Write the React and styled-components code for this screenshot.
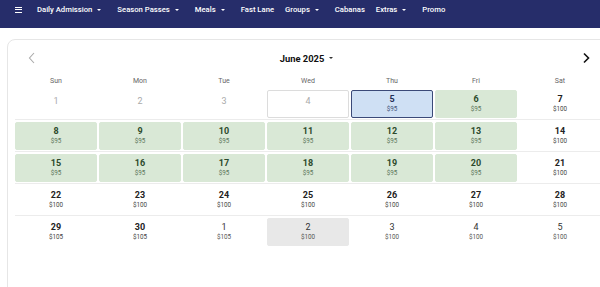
import styled, { createGlobalStyle } from "styled-components";

const Global = createGlobalStyle`
  html, body {
    margin: 0;
    padding: 0;
    background: #fff;
    overflow: hidden;
    font-family: Roboto, "Liberation Sans", sans-serif;
  }
`;

const Nav = styled.nav`
  height: 28px;
  background: #262d6a;
  display: flex;
  align-items: flex-start;
  padding: 5px 0 0 15px;
  box-sizing: border-box;
  color: #fff;
`;

const Burger = styled.div`
  width: 7px;
  height: 6px;
  margin: 2px 15px 0 0;
  border-top: 1.3px solid #fff;
  border-bottom: 1.3px solid #fff;
  position: relative;
  box-sizing: border-box;

  &::after {
    content: "";
    position: absolute;
    left: 0;
    right: 0;
    top: 1.2px;
    border-top: 1.3px solid #fff;
  }
`;

const NavItem = styled.div`
  display: flex;
  align-items: center;
  font-size: 7.7px;
  font-weight: 500;
  line-height: 10px;
  margin-right: 11px;
  white-space: nowrap;
`;

const Caret = styled.span`
  width: 0;
  height: 0;
  margin: 0 5px;
  border-left: 2px solid transparent;
  border-right: 2px solid transparent;
  border-top: 2.5px solid ${(p) => p.$color || "#fff"};
`;

const Card = styled.section`
  margin: 11px 0 0 7px;
  width: 602px;
  height: 262px;
  border: 1px solid #e6e6e6;
  border-radius: 8px;
  box-sizing: border-box;
  padding: 9px 7px 0;
`;

const Header = styled.div`
  height: 18px;
  display: flex;
  align-items: center;
  justify-content: space-between;
  padding: 0 10px 0 12px;
`;

const Month = styled.div`
  display: flex;
  align-items: center;
  font-size: 9.4px;
  font-weight: 700;
  color: #111;
`;

const Arrow = styled.svg`
  width: 10px;
  height: 12px;
`;

const Weekdays = styled.div`
  display: grid;
  grid-template-columns: repeat(7, 1fr);
  column-gap: 2px;
  margin-top: 7px;
  height: 14px;
`;

const Weekday = styled.div`
  text-align: center;
  font-size: 7px;
  line-height: 14px;
  color: #666;
`;

const Week = styled.div`
  display: grid;
  grid-template-columns: repeat(7, 1fr);
  column-gap: 2px;
  padding: 2px 0 1px;
  border-bottom: 1px solid ${(p) => (p.$last ? "transparent" : "#ececec")};
`;

const tones = {
  past: { bg: "#fff", border: "transparent", num: "#aaa", price: "#888" },
  today: { bg: "#fff", border: "#dcdcdc", num: "#aaa", price: "#888" },
  selected: { bg: "#cfe0f4", border: "#3b4a78", num: "#1f2f55", price: "#44557a" },
  deal: { bg: "#d9e8d6", border: "#d9e8d6", num: "#2c4a2c", price: "#5b775b" },
  normal: { bg: "#fff", border: "transparent", num: "#222", price: "#444" },
  next: { bg: "#fff", border: "transparent", num: "#333", price: "#555" },
  nextSel: { bg: "#e8e8e8", border: "#e8e8e8", num: "#333", price: "#555" },
};

const Cell = styled.div`
  height: 28px;
  box-sizing: border-box;
  border-radius: 2px;
  border: 1px solid ${(p) => tones[p.$tone].border};
  background: ${(p) => tones[p.$tone].bg};
  display: flex;
  flex-direction: column;
  align-items: center;
  justify-content: ${(p) => (p.$price ? "center" : "flex-start")};
  padding-top: ${(p) => (p.$price ? "0" : "5px")};
`;

const Num = styled.div`
  font-size: 9px;
  line-height: 11px;
  font-weight: ${(p) => (p.$bold ? 700 : 400)};
  color: ${(p) => tones[p.$tone].num};
`;

const Price = styled.div`
  font-size: 6.3px;
  line-height: 9px;
  color: ${(p) => tones[p.$tone].price};
`;

const navItems = [
  ["Daily Admission", true],
  ["Season Passes", true],
  ["Meals", true],
  ["Fast Lane", false],
  ["Groups", true],
  ["Cabanas", false],
  ["Extras", true],
  ["Promo", false],
];

const days = ["Sun", "Mon", "Tue", "Wed", "Thu", "Fri", "Sat"];

const weeks = [
  [
    [1, "past"],
    [2, "past"],
    [3, "past"],
    [4, "today"],
    [5, "selected", "$95"],
    [6, "deal", "$95"],
    [7, "normal", "$100"],
  ],
  [8, 9, 10, 11, 12, 13].map((d) => [d, "deal", "$95"]).concat([[14, "normal", "$100"]]),
  [15, 16, 17, 18, 19, 20].map((d) => [d, "deal", "$95"]).concat([[21, "normal", "$100"]]),
  [22, 23, 24, 25, 26, 27, 28].map((d) => [d, "normal", "$100"]),
  [
    [29, "normal", "$105"],
    [30, "normal", "$105"],
    [1, "next", "$105"],
    [2, "nextSel", "$100"],
    [3, "next", "$100"],
    [4, "next", "$100"],
    [5, "next", "$100"],
  ],
];

export default function App() {
  return (
    <>
      <Global />
      <Nav>
        <Burger />
        {navItems.map(([label, drop]) => (
          <NavItem key={label}>
            {label}
            {drop && <Caret />}
          </NavItem>
        ))}
      </Nav>
      <Card>
        <Header>
          <Arrow viewBox="0 0 10 12">
            <path d="M7 1 L2.5 6 L7 11" fill="none" stroke="#aaa" strokeWidth="1.1" />
          </Arrow>
          <Month>
            June 2025
            <Caret $color="#333" />
          </Month>
          <Arrow viewBox="0 0 10 12">
            <path d="M3 1.5 L7.5 6 L3 10.5" fill="none" stroke="#111" strokeWidth="1.6" />
          </Arrow>
        </Header>
        <Weekdays>
          {days.map((d) => (
            <Weekday key={d}>{d}</Weekday>
          ))}
        </Weekdays>
        {weeks.map((week, i) => (
          <Week key={i} $last={i === weeks.length - 1}>
            {week.map(([d, tone, price]) => (
              <Cell key={d + tone} $tone={tone} $price={!!price}>
                <Num $tone={tone} $bold={["selected", "deal", "normal"].includes(tone)}>
                  {d}
                </Num>
                {price && <Price $tone={tone}>{price}</Price>}
              </Cell>
            ))}
          </Week>
        ))}
      </Card>
    </>
  );
}
